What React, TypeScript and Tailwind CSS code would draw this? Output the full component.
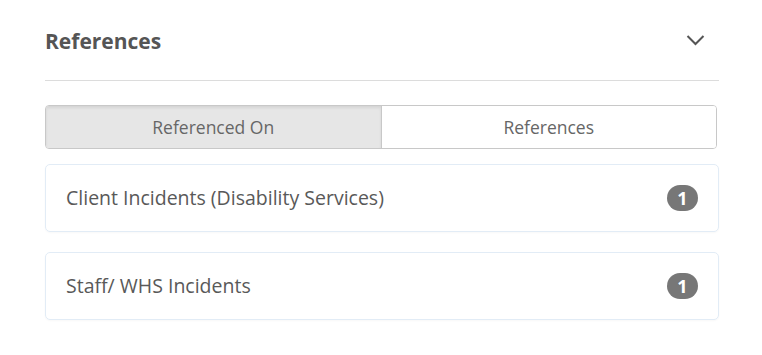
import { useState } from "react";

const items = [
  { name: "Client Incidents (Disability Services)", count: 1 },
  { name: "Staff/ WHS Incidents", count: 1 },
];

export default function App() {
  const [tab, setTab] = useState("on");

  return (
    <main className="min-h-screen bg-white font-['Open_Sans',sans-serif] text-[#555]">
      <div className="ml-[45px] w-[674px]">
        <div className="flex h-[81px] items-center justify-between border-b border-[#dcdcdc] pt-[4px]">
          <h2 className="text-[21px] font-bold text-[#555]">References</h2>
          <svg className="mr-[14px] mb-[4px]" width="19" height="12" viewBox="0 0 19 12" fill="none">
            <path d="M1.5 2 L9.5 10 L17.5 2" stroke="#555" strokeWidth="2" />
          </svg>
        </div>

        <div className="mt-[24px] flex h-[44px] w-[672px] overflow-hidden rounded-[4px] border border-[#c8c8c8] text-[17.5px] text-[#666]">
          <button
            onClick={() => setTab("on")}
            className={`flex-1 border-r border-[#c8c8c8] ${tab === "on" ? "bg-[#e6e6e6] shadow-[inset_0_2px_3px_rgba(0,0,0,0.08)]" : "bg-white"}`}
          >
            Referenced On
          </button>
          <button
            onClick={() => setTab("refs")}
            className={`flex-1 ${tab === "refs" ? "bg-[#e6e6e6] shadow-[inset_0_2px_3px_rgba(0,0,0,0.08)]" : "bg-white"}`}
          >
            References
          </button>
        </div>

        <div className="mt-[15px] flex flex-col gap-[20px]">
          {items.map((item) => (
            <div
              key={item.name}
              className="flex h-[68px] items-center justify-between rounded-[5px] border border-[#e2ecf6] pl-[20px] pr-[20px] shadow-[0_1px_2px_rgba(0,0,0,0.03)]"
            >
              <span className="text-[19.5px] text-[#595959]">{item.name}</span>
              <span className="flex h-[26px] w-[31px] items-center justify-center rounded-full bg-[#777] text-[18px] font-bold text-white">
                {item.count}
              </span>
            </div>
          ))}
        </div>
      </div>
    </main>
  );
}
